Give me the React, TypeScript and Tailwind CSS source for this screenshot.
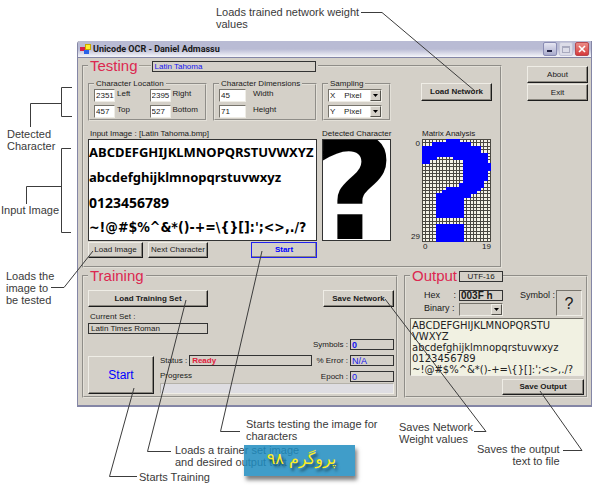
import type { ReactNode } from "react";

const small =
  "font-['Liberation_Sans',Arial,sans-serif] text-[8px] leading-[10px]";

const raised =
  "border border-t-[#efede6] border-l-[#efede6] border-r-[#1c1c1c] border-b-[#1c1c1c] bg-[#d4d0c8] shadow-[inset_-1px_-1px_0_#8a877f] flex items-center justify-center whitespace-nowrap";

const sunken =
  "border border-t-[#77746c] border-l-[#77746c] border-r-[#efede6] border-b-[#efede6]";

const boldText =
  "font-['Liberation_Sans',Arial,sans-serif] text-[8px] leading-[10px] font-bold";

const groove = "min-w-0 border-2 [border-style:groove] border-[#e3e0d8]";

const legendText =
  "font-['Liberation_Sans',Arial,sans-serif] text-[15px] leading-4 text-[#dc2850]";

function NumberField({ id, label, value, wide = false }: { id: string; label: string; value: string; wide?: boolean }) {
  return (
    <div className={`flex flex-1 items-start ${wide ? "gap-[7px]" : "gap-[2px]"}`}>
      <input
        id={id}
        defaultValue={value}
        className={`${sunken} h-[13px] bg-white pl-px ${small} ${wide ? "w-[27px]" : "w-[21px]"}`}
      />
      <label htmlFor={id}>{label}</label>
    </div>
  );
}

function DropDown({ id, label, text, tone, width }: { id: string; label: string; text: string; tone: string; width: string }) {
  return (
    <div className={`relative h-[13px] ${width}`}>
      <select
        id={id}
        aria-label={label}
        className={`block h-full w-full appearance-none pl-px whitespace-pre ${sunken} ${tone} ${small}`}
      >
        <option>{text}</option>
      </select>
      <span className="pointer-events-none absolute top-px right-px flex h-[11px] w-[11px] items-center justify-center border border-t-[#efede6] border-l-[#efede6] border-r-[#55534d] border-b-[#55534d] bg-[#d4d0c8]">
        <svg width="5" height="3" viewBox="0 0 5 3">
          <path d="M0 0h5L2.500 3z" fill="#000" />
        </svg>
      </span>
    </div>
  );
}

function Group({ title, className, children }: { title: string; className: string; children: ReactNode }) {
  return (
    <fieldset className={`h-[42px] pl-1 ${groove} ${small} ${className}`}>
      <legend className="h-[10px] px-[2px] whitespace-nowrap">{title}</legend>
      {children}
    </fieldset>
  );
}

function Stat({ id, label, value, className }: { id: string; label: string; value: string; className: string }) {
  return (
    <div className="flex h-[11px] items-center justify-end gap-[2px] whitespace-nowrap">
      <label htmlFor={id}>{label}</label>
      <output
        id={id}
        className={`h-[11px] w-11 border border-[#333] pl-px leading-[10px] text-[#1414f0] ${className}`}
      >
        {value}
      </output>
    </div>
  );
}

// Filled runs of the 20 x 30 sample matrix: column, row, width, height.
const matrixRuns: number[][] = [
  [7, 0, 4, 1], [3, 1, 11, 1], [0, 2, 17, 2], [0, 4, 19, 1], [0, 5, 4, 1], [9, 5, 10, 1],
  [0, 6, 2, 1], [12, 6, 7, 1], [12, 7, 8, 2], [12, 9, 7, 3], [12, 12, 6, 1], [11, 13, 7, 1],
  [7, 14, 10, 1], [6, 15, 10, 1], [4, 16, 10, 1], [4, 17, 8, 6], [4, 25, 8, 5],
];

function Matrix() {
  const c = 3.4;
  return (
    <svg width="69" height="103" viewBox="0 0 69 103" className="shrink-0" role="img" aria-label="Matrix Analysis">
      <rect width="69" height="103" fill="#f4f2e6" />
      {Array.from({ length: 21 }, (_, i) => (
        <rect key={`v${i}`} x={Math.round(i * c)} y="0" width="1" height="103" fill="#4a4842" />
      ))}
      {Array.from({ length: 31 }, (_, i) => (
        <rect key={`h${i}`} x="0" y={Math.round(i * c)} width="69" height="1" fill="#4a4842" />
      ))}
      {matrixRuns.map(([x, y, w, h]) => (
        <rect
          key={`${x}-${y}`}
          x={Math.round(x * c)}
          y={Math.round(y * c)}
          width={Math.round((x + w) * c) - Math.round(x * c) + 1}
          height={Math.round((y + h) * c) - Math.round(y * c) + 1}
          fill="#0000ff"
        />
      ))}
    </svg>
  );
}

function TitleBar() {
  return (
    <header className="flex h-[17px] items-center rounded-tl-[3px] border-b border-[#8486a6] bg-linear-to-b from-[#b9bbd4] via-[#b9bbd4] to-[#f6f6fa] pr-[2px] pl-[2px]">
      <svg width="11" height="10" viewBox="0 0 11 10" className="shrink-0">
        <rect x="0" y="3" width="5" height="4" fill="#d8204c" />
        <rect x="5" y="0" width="6" height="6" fill="#c8a800" />
        <rect x="6" y="1" width="4" height="4" fill="#ffee30" />
        <rect x="4" y="6" width="5" height="4" fill="#2a62e8" />
      </svg>
      <h1 className="ml-[2px] flex-1 font-[Roboto,sans-serif] text-[9px] leading-3 font-bold whitespace-nowrap text-[#181818]">
        Unicode OCR - Daniel Admassu
      </h1>
      <div className="flex gap-[2px]">
        <button aria-label="Minimize" className="flex h-[14px] w-[14px] items-end justify-start rounded-[2px] border border-[#8a8cb4] bg-linear-to-b from-[#e6e6f2] to-[#a9abcc] pb-[3px] pl-[3px]">
          <span className="h-[2px] w-[5px] bg-[#222244]" />
        </button>
        <button aria-label="Maximize" disabled className="flex h-[14px] w-[14px] items-center justify-center rounded-[2px] border border-[#c3c4d8] bg-[#dcdce8]">
          <span className="h-[7px] w-[8px] border border-t-2 border-[#a9aabf]" />
        </button>
        <button aria-label="Close" className="flex h-[14px] w-[14px] items-center justify-center rounded-[2px] border border-[#b84850] bg-linear-to-b from-[#ea8a86] to-[#d5383c]">
          <svg width="8" height="8" viewBox="0 0 8 8">
            <path d="M1 1l6 6M7 1L1 7" stroke="#fff" strokeWidth="1.600" />
          </svg>
        </button>
      </div>
    </header>
  );
}

function Testing() {
  return (
    <fieldset className={`flex-1 pr-2 pb-2 pl-1 ${groove}`}>
      <legend className="flex h-4 items-center px-[2px]">
        <span className={legendText}>Testing</span>
        <span className="mx-px h-[2px] w-3 border-t border-[#9f9c93] bg-[#e3e0d8]" />
        <span className={`h-[11px] w-[164px] border border-[#333] pl-[2px] text-[#1414f0] ${small}`}>Latin Tahoma</span>
      </legend>

      <div className="flex pt-[5px]">
        <div className="flex flex-1 gap-[6px]">
          <Group title="Character Location" className="flex-1">
            <div className="flex flex-col gap-[3px]">
              <div className="flex">
                <NumberField id="left" label="Left" value="2351" />
                <NumberField id="right" label="Right" value="2395" />
              </div>
              <div className="flex">
                <NumberField id="top" label="Top" value="457" />
                <NumberField id="bottom" label="Bottom" value="527" />
              </div>
            </div>
          </Group>
          <Group title="Character Dimensions" className="w-[104px]">
            <div className="flex flex-col gap-[3px]">
              <NumberField id="width" label="Width" value="45" wide />
              <NumberField id="height" label="Height" value="71" wide />
            </div>
          </Group>
        </div>
        <Group title="Sampling" className="ml-[5px] w-[69px]">
          <div className="flex flex-col gap-[3px]">
            <DropDown id="sx" label="X sampling" text={"X \u00a0 \u00a0Pixel"} tone="bg-white" width="w-[54px]" />
            <DropDown id="sy" label="Y sampling" text={"Y \u00a0 \u00a0Pixel"} tone="bg-white" width="w-[54px]" />
          </div>
        </Group>
        <button className={`mt-1 ml-[30px] h-[18px] w-[71px] ${raised} ${boldText}`}>Load Network</button>
      </div>

      <div className={`flex pt-2 ${small}`}>
        <div className="min-w-0 flex-1">
          <p className="h-[10px] pl-[2px]">Input Image : [Latin Tahoma.bmp]</p>
          <div className="flex h-[102px] flex-col border border-[#333] bg-white font-['Noto_Sans',sans-serif] text-[13px] leading-[25px] font-bold whitespace-nowrap text-black">
            <p>ABCDEFGHIJKLMNOPQRSTUVWXYZ</p>
            <p>abcdefghijklmnopqrstuvwxyz</p>
            <p className="text-[14px]">0123456789</p>
            <p className="font-['DejaVu_Sans_Condensed','DejaVu_Sans',sans-serif] text-[14px]">{"~!@#$%^&*()-+=\\{}[]:';<>,./?"}</p>
          </div>
        </div>
        <div className="ml-[5px] w-[69px]">
          <p className="h-[10px] whitespace-nowrap">Detected Character</p>
          <div className="flex h-[102px] items-center justify-center overflow-hidden border border-[#333] bg-white pr-1 font-['DejaVu_Sans',sans-serif] text-[142px] leading-none font-bold text-black">
            ?
          </div>
        </div>
        <div className="ml-[20px] w-[81px]">
          <p className="h-[10px] pl-[11px] whitespace-nowrap">Matrix Analysis</p>
          <div className="flex gap-[2px]">
            <div className="flex w-[9px] flex-col items-end justify-between">
              <span>0</span>
              <span>29</span>
            </div>
            <Matrix />
          </div>
          <div className="flex justify-between pr-px pl-3">
            <span>0</span>
            <span>19</span>
          </div>
        </div>
      </div>

      <div className="-mt-[10px] flex w-[229px] gap-[5px]">
        <button className={`h-4 w-[55px] ${raised} ${small}`}>Load Image</button>
        <button className={`h-4 w-[60px] ${raised} ${small}`}>Next Character</button>
        <button className={`ml-auto h-4 w-[66px] outline-1 -outline-offset-1 outline-[#2020f0] ${raised} ${boldText} text-[#0000ff]`}>Start</button>
      </div>
    </fieldset>
  );
}

function Training() {
  return (
    <fieldset className={`flex-1 pr-[2px] pb-[2px] pl-1 ${groove} ${small}`}>
      <legend className={`h-4 px-[2px] ${legendText}`}>Training</legend>
      <div className="flex justify-between pt-[6px]">
        <button className={`h-[17px] w-[120px] ${raised} ${boldText}`}>Load Training Set</button>
        <button className={`h-[17px] w-[71px] ${raised} ${boldText}`}>Save Network</button>
      </div>
      <label htmlFor="set" className="mt-[5px] block h-[11px] pl-[2px]">Current Set :</label>
      <output id="set" className="block h-[11px] w-[120px] border border-[#333] pl-[2px]">Latin Times Roman</output>
      <div className="mt-[5px] flex items-end gap-[6px]">
        <button className={`h-[38px] w-[66px] ${raised} font-['Liberation_Sans',Arial,sans-serif] text-[12px] text-[#0000ff]`}>Start</button>
        <div className="flex-1">
          <div className="flex">
            <div className="flex flex-1 flex-col gap-[5px] pt-4">
              <div className="flex items-center gap-[2px]">
                <label htmlFor="status" className="whitespace-nowrap">Status :</label>
                <output id="status" className={`h-[11px] flex-1 border border-[#333] pl-[2px] text-[#e0203c] ${boldText}`}>Ready</output>
              </div>
              <p>Progress</p>
            </div>
            <div className="flex w-[82px] flex-col gap-[5px]">
              <Stat id="symbols" label="Symbols :" value="0" className="text-[9px] font-bold" />
              <Stat id="error" label="% Error :" value="N/A" className="text-[9px]" />
              <Stat id="epoch" label="Epoch :" value="0" className="text-[9px]" />
            </div>
          </div>
          <div role="progressbar" aria-label="Progress" className="mt-px h-[11px] border border-t-[#b5b2aa] border-l-[#b5b2aa] border-r-[#efede6] border-b-[#efede6] bg-[#dedde2]" />
        </div>
      </div>
    </fieldset>
  );
}

const outputText =
  "ABCDEFGHIJKLMNOPQRSTU\nVWXYZ\nabcdefghijklmnopqrstuvwxyz\n0123456789\n~!@#$%^&*()-+=\\{}[]:';<>,./?";

function OutputPanel() {
  return (
    <fieldset className={`w-[184px] pr-[2px] pl-1 font-['Liberation_Sans',Arial,sans-serif] text-[9px] leading-[11px] ${groove}`}>
      <legend className="flex h-4 items-center gap-[2px] pl-[2px]">
        <span className={legendText}>Output</span>
        <span className="h-[11px] w-11 border border-[#333] text-center text-[8px] leading-[10px]">UTF-16</span>
      </legend>
      <div className="flex pt-[6px] pr-[2px] pl-[14px]">
        <div className="flex w-[79px] flex-col gap-[2px]">
          <div className="flex justify-between">
            <label htmlFor="hex" className="flex w-8 justify-between"><span>Hex</span><span>:</span></label>
            <output id="hex" className="h-[11px] w-11 border border-[#333] pl-px text-[10px] leading-[10px] font-bold">003F h</output>
          </div>
          <div className="flex justify-between">
            <label htmlFor="binary" className="w-8 whitespace-nowrap">Binary :</label>
            <DropDown id="binary" label="Binary" text="" tone="bg-[#d4d0c8]" width="w-11" />
          </div>
        </div>
        <div className="ml-auto flex gap-px">
          <label htmlFor="symbol" className="whitespace-nowrap">Symbol :</label>
          <output id="symbol" className={`flex h-[26px] w-[26px] items-center justify-center text-[16px] ${sunken}`}>?</output>
        </div>
      </div>
      <textarea
        aria-label="Output"
        wrap="off"
        defaultValue={outputText}
        className={`mt-[2px] block h-[58px] w-full resize-none overflow-hidden bg-[#f1f1e2] pt-px pl-px font-['DejaVu_Sans',sans-serif] text-[10px] leading-[11px] text-[#222] ${sunken}`}
      />
      <button className={`mt-[3px] ml-auto h-4 w-[82px] ${raised} ${boldText}`}>Save Output</button>
    </fieldset>
  );
}

const notes = [
  { text: "Loads trained network weight\nvalues", at: "left-[216px] top-[6px]" },
  { text: "Detected\nCharacter", at: "left-[7px] top-[128px]" },
  { text: "Input Image", at: "left-px top-[204px]" },
  { text: "Loads the\nimage to\nbe tested", at: "left-[6px] top-[270px]" },
  { text: "Starts testing the image for\ncharacters", at: "left-[246px] top-[418px]" },
  { text: "Loads a trainer set image\nand desired output text", at: "left-[175px] top-[444px]" },
  { text: "Starts Training", at: "left-[139px] top-[471px]" },
  { text: "Saves Network\nWeight values", at: "left-[399px] top-[421px]" },
  { text: "Saves the output\ntext to file", at: "left-[477px] top-[443px] text-right" },
];

const leaders = [
  "M361 12.500H382L475 91",
  "M72 87.500H61.500V116.500H72M61 103.500H30.500V127",
  "M71 148.500H61.500V232.500H71M61 186.500H26.500V204",
  "M51 287.500H64L93 251",
  "M262 251L220.500 431.500H240",
  "M186 300L147.500 451.500H171",
  "M134 388L109.500 476.500H137",
  "M385 299L486 431.500H474",
  "M540 391L582 450.500H563",
];

export default function App() {
  return (
    <main className="relative min-h-screen bg-white pt-[41px] pr-2 pb-[79px] pl-[77px] text-[#1a1a1a]">
      <section className="rounded-tl-[3px] border-r border-b-2 border-l border-[#8486a6] bg-[#d4d0c8]">
        <TitleBar />
        <div className="px-1 pr-[3px] pb-[7px]">
          <div className="flex gap-[25px]">
            <Testing />
            <div className={`flex w-[61px] flex-col gap-px pt-2 ${small}`}>
              <button className={`h-[17px] ${raised}`}>About</button>
              <button className={`h-[17px] ${raised}`}>Exit</button>
            </div>
          </div>
          <div className="flex gap-[6px]">
            <Training />
            <OutputPanel />
          </div>
        </div>
      </section>

      <svg width="600" height="485" className="pointer-events-none absolute top-0 left-0" fill="none" stroke="#3c3c3c" strokeWidth="1">
        {leaders.map((d) => (
          <path key={d} d={d} />
        ))}
      </svg>
      {notes.map((n) => (
        <p
          key={n.text}
          className={`absolute font-['Liberation_Sans',Arial,sans-serif] text-[11px] leading-3 whitespace-pre text-[#3a3a3a] ${n.at}`}
        >
          {n.text}
        </p>
      ))}
      <div
        dir="rtl"
        className="absolute top-[445px] left-[244px] flex h-[31px] w-[111px] items-center justify-center bg-[#1f8cbf]/85 pr-2 pb-1 pl-3 font-['DejaVu_Sans',sans-serif] text-[16px] leading-5 text-[#ffee22] shadow-[2px_4px_4px_rgba(0,0,0,0.5)] [text-shadow:2px_3px_3px_rgba(0,0,0,0.6)]"
      >
        پروگرم ۹۸
      </div>
    </main>
  );
}
